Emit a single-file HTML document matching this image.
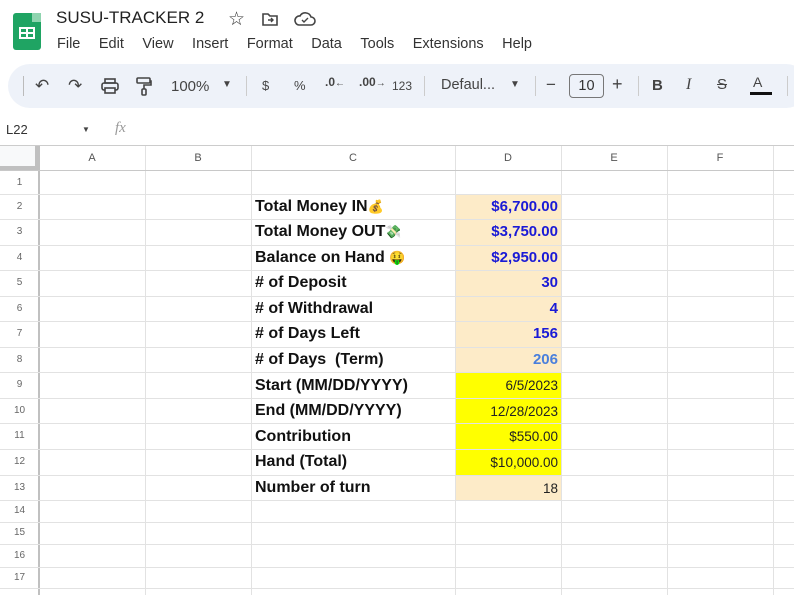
<!DOCTYPE html>
<html><head><meta charset="utf-8"><style>
*{margin:0;padding:0;box-sizing:border-box}
body{width:794px;height:595px;overflow:hidden;background:#fff;font-family:"Liberation Sans",Arial,sans-serif;position:relative}
.a{position:absolute}
.menu span{margin-right:18.5px}
.tb{color:#444;font-size:14px}
.hl{position:absolute;left:0;width:794px;height:1px;background:#e2e2e2}
.vl{position:absolute;top:146px;width:1px;height:449px;background:#e2e2e2}
.rn{position:absolute;left:0;width:39px;text-align:center;font-size:10px;color:#666}
.ch{position:absolute;top:146px;height:24px;line-height:24px;text-align:center;font-size:11px;color:#555}
.lab{position:absolute;left:255px;font-weight:bold;font-size:16px;color:#111;white-space:nowrap}
.val{position:absolute;left:455px;width:106px;text-align:right;padding-right:3px;font-size:14px}
</style></head><body>
<div class="a" style="left:13px;top:13px;width:28px;height:37px;background:#1fa463;border-radius:3px"></div>
<div class="a" style="left:32px;top:13px;width:9px;height:9px;background:#8fd4af"></div>
<div class="a" style="left:19px;top:27px;width:16px;height:12px;border:2px solid #fff;background:linear-gradient(#fff,#fff) center/2px 100% no-repeat,linear-gradient(#fff,#fff) center/100% 2px no-repeat"></div>
<div class="a" style="left:56px;top:8px;font-size:17px;color:#222">SUSU-TRACKER 2</div>
<div class="a" style="left:228px;top:8px;font-size:19px;color:#333">☆</div>
<svg class="a" style="left:261px;top:11px" width="18" height="16"><path d="M2 3h5l2 2h7v9H2z" fill="none" stroke="#444" stroke-width="1.6"/><path d="M7 9h5M10 7l2 2-2 2" fill="none" stroke="#444" stroke-width="1.4"/></svg>
<svg class="a" style="left:294px;top:11px" width="22" height="16"><path d="M5 14h12a4 4 0 0 0 0-8 6 6 0 0 0-11-1 4.5 4.5 0 0 0-1 9z" fill="none" stroke="#444" stroke-width="1.6"/><path d="M8 9l2 2 4-4" fill="none" stroke="#444" stroke-width="1.4"/></svg>
<div class="a menu" style="left:57px;top:36px;font-size:14.5px;color:#333;white-space:nowrap"><span>File</span><span>Edit</span><span>View</span><span>Insert</span><span>Format</span><span>Data</span><span>Tools</span><span>Extensions</span><span>Help</span></div>
<div class="a" style="left:8px;top:64px;width:800px;height:44px;background:#eef2f9;border-radius:22px"></div>
<div class="a" style="left:23px;top:76px;width:1px;height:20px;background:#bbb"></div>
<div class="a tb" style="left:35px;top:76px;font-size:17px">↶</div>
<div class="a tb" style="left:68px;top:76px;font-size:17px">↷</div>
<svg class="a" style="left:101px;top:78px" width="18" height="16"><rect x="4" y="1" width="10" height="4" fill="none" stroke="#444" stroke-width="1.6"/><rect x="1" y="5" width="16" height="7" rx="2" fill="none" stroke="#444" stroke-width="1.6"/><rect x="4" y="10" width="10" height="5" fill="#eef2f9" stroke="#444" stroke-width="1.6"/></svg>
<svg class="a" style="left:136px;top:77px" width="16" height="19"><rect x="1" y="1" width="13" height="5" rx="1" fill="none" stroke="#444" stroke-width="1.6"/><path d="M14 4h1v4H8v4" fill="none" stroke="#444" stroke-width="1.6"/><rect x="6" y="12" width="4" height="6" rx="1" fill="none" stroke="#444" stroke-width="1.6"/></svg>
<div class="a tb" style="left:171px;top:78px;font-size:15px">100%</div>
<div class="a tb" style="left:222px;top:79px;font-size:10px">▼</div>
<div class="a" style="left:246px;top:76px;width:1px;height:20px;background:#ccc"></div>
<div class="a tb" style="left:262px;top:78px;font-size:13px">$</div>
<div class="a tb" style="left:294px;top:78px;font-size:13px">%</div>
<div class="a tb" style="left:325px;top:75px;font-size:12px;font-weight:bold">.0<span style="font-size:10px">←</span></div>
<div class="a tb" style="left:359px;top:75px;font-size:12px;font-weight:bold">.00<span style="font-size:10px">→</span></div>
<div class="a tb" style="left:392px;top:79px;font-size:12px">123</div>
<div class="a" style="left:424px;top:76px;width:1px;height:20px;background:#ccc"></div>
<div class="a tb" style="left:441px;top:77px;font-size:14.5px">Defaul...</div>
<div class="a tb" style="left:510px;top:79px;font-size:10px">▼</div>
<div class="a" style="left:535px;top:76px;width:1px;height:20px;background:#ccc"></div>
<div class="a tb" style="left:546px;top:75px;font-size:17px">−</div>
<div class="a" style="left:569px;top:74px;width:35px;height:24px;border:1px solid #777;border-radius:4px;text-align:center;line-height:22px;font-size:14.5px;color:#333">10</div>
<div class="a tb" style="left:612px;top:74px;font-size:18px">+</div>
<div class="a" style="left:638px;top:76px;width:1px;height:20px;background:#ccc"></div>
<div class="a tb" style="left:652px;top:77px;font-size:15px;font-weight:bold">B</div>
<div class="a tb" style="left:686px;top:76px;font-size:16px;font-style:italic;font-family:'Liberation Serif',serif">I</div>
<div class="a tb" style="left:717px;top:76px;font-size:15px;text-decoration:line-through">S</div>
<div class="a tb" style="left:753px;top:74px;font-size:14px">A</div>
<div class="a" style="left:750px;top:92px;width:22px;height:3px;background:#111"></div>
<div class="a" style="left:787px;top:76px;width:1px;height:20px;background:#ccc"></div>
<div class="a" style="left:6px;top:122px;font-size:13px;color:#333">L22</div>
<div class="a" style="left:82px;top:125px;font-size:8px;color:#444">▼</div>
<div class="a" style="left:115px;top:120px;font-size:15px;color:#999;font-style:italic;font-family:'Liberation Serif',serif">fx</div>
<div class="a" style="left:0;top:145px;width:794px;height:1px;background:#ccc"></div>
<div class="a" style="left:0;top:146px;width:39px;height:24px;background:#f8f9fa;border-right:4px solid #c0c0c0;border-bottom:4px solid #c0c0c0"></div>
<div class="a" style="left:455px;top:194px;width:106px;height:179px;background:#fdebc8"></div>
<div class="a" style="left:455px;top:372px;width:106px;height:103px;background:#ffff00"></div>
<div class="a" style="left:455px;top:475px;width:106px;height:25px;background:#fdebc8"></div>
<div class="a" style="left:38px;top:146px;width:2px;height:449px;background:#c0c0c0"></div>
<div class="vl" style="left:145px"></div><div class="vl" style="left:251px"></div><div class="vl" style="left:455px"></div><div class="vl" style="left:561px"></div><div class="vl" style="left:667px"></div><div class="vl" style="left:773px"></div>
<div class="hl" style="top:170px;background:#c8c8c8"></div>
<div class="hl" style="top:194px"></div><div class="hl" style="top:219px"></div><div class="hl" style="top:245px"></div><div class="hl" style="top:270px"></div><div class="hl" style="top:296px"></div><div class="hl" style="top:321px"></div><div class="hl" style="top:347px"></div><div class="hl" style="top:372px"></div><div class="hl" style="top:398px"></div><div class="hl" style="top:423px"></div><div class="hl" style="top:449px"></div><div class="hl" style="top:475px"></div><div class="hl" style="top:500px"></div><div class="hl" style="top:522px"></div><div class="hl" style="top:544px"></div><div class="hl" style="top:567px"></div><div class="hl" style="top:588px"></div>
<div class="ch" style="left:39px;width:106px">A</div><div class="ch" style="left:145px;width:106px">B</div><div class="ch" style="left:251px;width:204px">C</div><div class="ch" style="left:455px;width:106px">D</div><div class="ch" style="left:561px;width:106px">E</div><div class="ch" style="left:667px;width:106px">F</div>
<div class="rn" style="top:177px">1</div><div class="rn" style="top:201px">2</div><div class="rn" style="top:226px">3</div><div class="rn" style="top:252px">4</div><div class="rn" style="top:277px">5</div><div class="rn" style="top:303px">6</div><div class="rn" style="top:328px">7</div><div class="rn" style="top:354px">8</div><div class="rn" style="top:379px">9</div><div class="rn" style="top:405px">10</div><div class="rn" style="top:430px">11</div><div class="rn" style="top:456px">12</div><div class="rn" style="top:482px">13</div><div class="rn" style="top:505px">14</div><div class="rn" style="top:527px">15</div><div class="rn" style="top:550px">16</div><div class="rn" style="top:572px">17</div>
<div class="lab" style="top:198px">Total Money IN<span style="font-size:13px">💰</span></div>
<div class="lab" style="top:223px">Total Money OUT<span style="font-size:13px">💸</span></div>
<div class="lab" style="top:249px">Balance on Hand <span style="font-size:13px">🤑</span></div>
<div class="lab" style="top:274px"># of Deposit</div>
<div class="lab" style="top:300px"># of Withdrawal</div>
<div class="lab" style="top:325px"># of Days Left</div>
<div class="lab" style="top:351px"># of Days &nbsp;(Term)</div>
<div class="lab" style="top:377px">Start (MM/DD/YYYY)</div>
<div class="lab" style="top:402px">End (MM/DD/YYYY)</div>
<div class="lab" style="top:428px">Contribution</div>
<div class="lab" style="top:453px">Hand (Total)</div>
<div class="lab" style="top:479px">Number of turn</div>
<div class="val" style="top:198px;color:#1a1ad6;font-weight:bold;font-size:15px">$6,700.00</div>
<div class="val" style="top:223px;color:#1a1ad6;font-weight:bold;font-size:15px">$3,750.00</div>
<div class="val" style="top:249px;color:#1a1ad6;font-weight:bold;font-size:15px">$2,950.00</div>
<div class="val" style="top:274px;color:#1a1ad6;font-weight:bold;font-size:15px">30</div>
<div class="val" style="top:300px;color:#1a1ad6;font-weight:bold;font-size:15px">4</div>
<div class="val" style="top:325px;color:#1a1ad6;font-weight:bold;font-size:15px">156</div>
<div class="val" style="top:351px;color:#4a7fdc;font-weight:bold;font-size:15px">206</div>
<div class="val" style="top:378px;color:#222;font-size:13.5px">6/5/2023</div>
<div class="val" style="top:404px;color:#222;font-size:13.5px">12/28/2023</div>
<div class="val" style="top:429px;color:#222;font-size:13.5px">$550.00</div>
<div class="val" style="top:455px;color:#222;font-size:13.5px">$10,000.00</div>
<div class="val" style="top:481px;color:#222;font-size:13.5px">18</div>
</body></html>
